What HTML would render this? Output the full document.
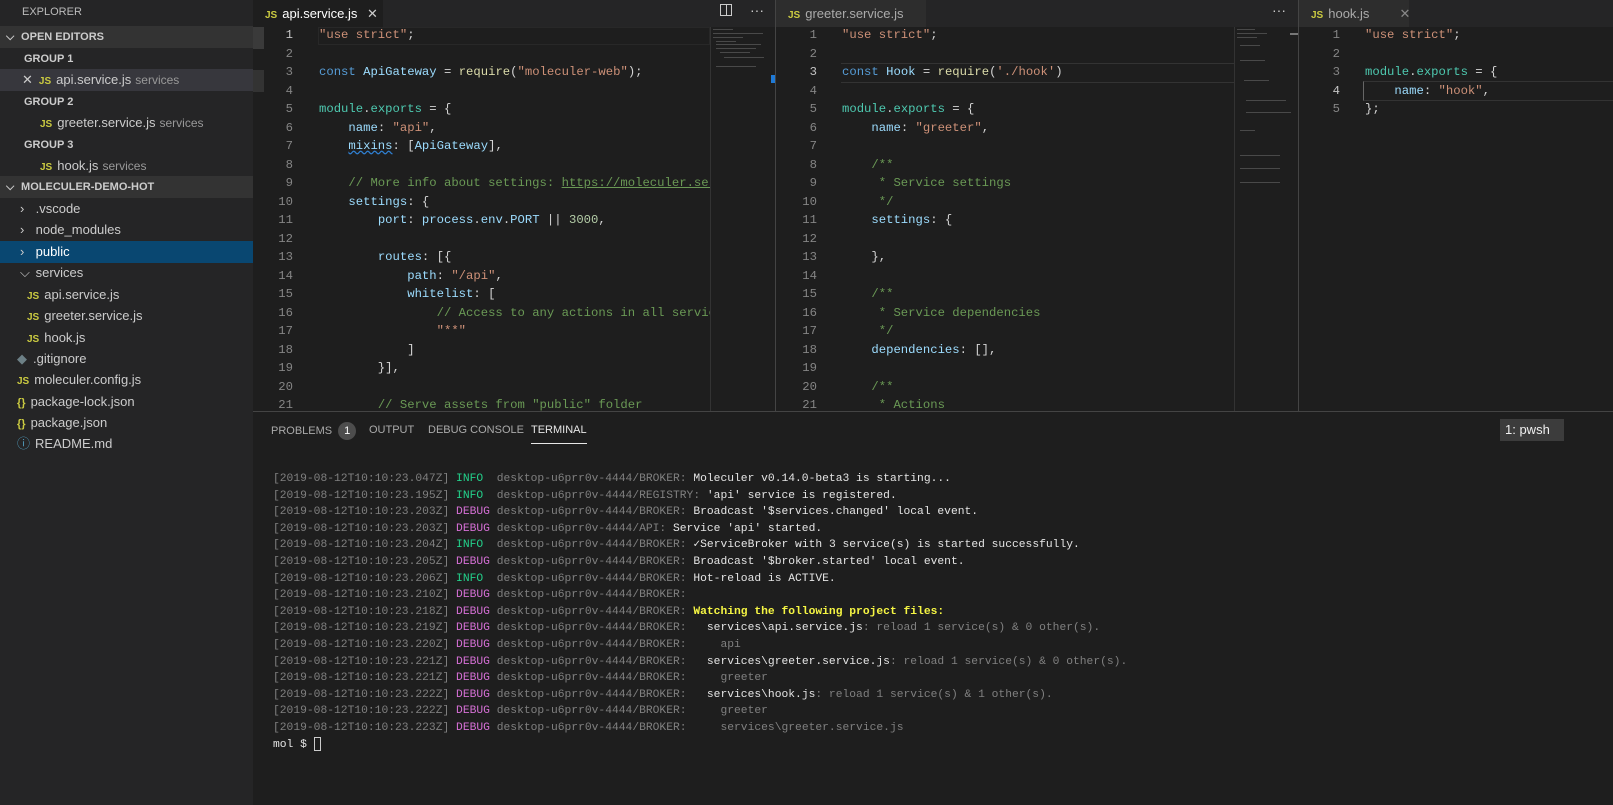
<!DOCTYPE html>
<html><head><meta charset="utf-8"><style>
*{margin:0;padding:0;box-sizing:border-box}
html,body{width:1613px;height:805px;overflow:hidden}
body{background:#1e1e1e;font-family:"Liberation Sans",sans-serif;position:relative}
.abs{position:absolute}
#side{left:0;top:0;width:253px;height:805px;background:#252526;color:#ccc;font-size:13px}
.row{position:absolute;left:0;width:253px;height:22px;line-height:22px;white-space:nowrap}
.hdr{font-weight:bold;font-size:11px;color:#ccc}
.js{color:#cbcb41;font-weight:bold;font-size:10px;margin-right:5px}
.dim{color:#999;font-size:12px;margin-left:4px}
.chev{display:inline-block;width:12px;color:#ccc}
.tabbar{position:absolute;top:0;height:27px;background:#252526}
.tab{position:absolute;top:0;height:27px;line-height:27px;font-size:13px;padding-left:12px;white-space:nowrap}
.code{position:absolute;top:26px;font-family:"Liberation Mono",monospace;font-size:12.25px;color:#d4d4d4}
.ln{position:absolute;top:26px;font-family:"Liberation Mono",monospace;font-size:12.25px;color:#858585;text-align:right}
.code div,.ln div{height:18.5px;line-height:18.5px;white-space:pre}
.s{color:#ce9178}.k{color:#569cd6}.v{color:#9cdcfe}.f{color:#dcdcaa}.t{color:#4ec9b0}.c{color:#6a9955}.n{color:#b5cea8}
#term{position:absolute;left:273px;top:471px;font-family:"Liberation Mono",monospace;font-size:11.3px;color:#ccc}
#term div{height:16.6px;line-height:16.6px;white-space:pre}
.g{color:#808080}.i{color:#23d18b}.d{color:#d670d6}.y{color:#f5f543;font-weight:bold}.w{color:#e5e5e5}
.mm{position:absolute;height:1px;background:#666;opacity:.6}
</style></head><body>
<div id="side" class="abs">
 <div class="row" style="top:0;height:24px;line-height:24px;padding-left:22px;font-size:11px;color:#bbb">EXPLORER</div>
 <div class="row hdr" style="top:26px;background:#333;padding-left:6px"><span class="chev">⌵</span> OPEN EDITORS</div>
 <div class="row hdr" style="top:48px;padding-left:24px">GROUP 1</div>
 <div class="row" style="top:69px;background:#37373d;padding-left:22px"><span style="color:#ccc;margin-right:6px">✕</span><span class="js">JS</span>api.service.js<span class="dim">services</span></div>
 <div class="row hdr" style="top:91px;padding-left:24px">GROUP 2</div>
 <div class="row" style="top:112px;padding-left:40px"><span class="js">JS</span>greeter.service.js<span class="dim">services</span></div>
 <div class="row hdr" style="top:134px;padding-left:24px">GROUP 3</div>
 <div class="row" style="top:155px;padding-left:40px"><span class="js">JS</span>hook.js<span class="dim">services</span></div>
 <div class="row hdr" style="top:176px;background:#333;padding-left:6px"><span class="chev">⌵</span> MOLECULER-DEMO-HOT</div>
 <div class="row" style="top:198px;padding-left:20px"><span class="chev">›</span> .vscode</div>
 <div class="row" style="top:219px;padding-left:20px"><span class="chev">›</span> node_modules</div>
 <div class="row" style="top:241px;padding-left:20px;background:#094771;color:#fff"><span class="chev">›</span> public</div>
 <div class="row" style="top:262px;padding-left:20px"><span class="chev">⌵</span> services</div>
 <div class="row" style="top:284px;padding-left:27px"><span class="js">JS</span>api.service.js</div>
 <div class="row" style="top:305px;padding-left:27px"><span class="js">JS</span>greeter.service.js</div>
 <div class="row" style="top:327px;padding-left:27px"><span class="js">JS</span>hook.js</div>
 <div class="row" style="top:348px;padding-left:17px"><span style="color:#6d8086;margin-right:6px">◆</span>.gitignore</div>
 <div class="row" style="top:369px;padding-left:17px"><span class="js">JS</span>moleculer.config.js</div>
 <div class="row" style="top:391px;padding-left:17px"><span style="color:#cbcb41;font-weight:bold;font-size:11px;margin-right:5px">{}</span>package-lock.json</div>
 <div class="row" style="top:412px;padding-left:17px"><span style="color:#cbcb41;font-weight:bold;font-size:11px;margin-right:5px">{}</span>package.json</div>
 <div class="row" style="top:433px;padding-left:17px"><span style="color:#519aba;margin-right:5px">ⓘ</span>README.md</div>
</div>

<!-- group 1 -->
<div class="tabbar" style="left:253px;width:522px"></div>
<div class="tab" style="left:253px;width:130px;background:#1e1e1e;color:#fff"><span class="js">JS</span>api.service.js <span style="margin-left:6px;color:#ccc">✕</span></div>
<div class="abs" style="left:720px;top:4px;width:12px;height:12px;border:1.5px solid #ccc"></div><div class="abs" style="left:726px;top:4px;width:1px;height:12px;background:#ccc"></div>
<div class="abs" style="left:750px;top:0;color:#ccc;font-size:14px;line-height:20px">···</div>
<div class="abs" style="left:253px;top:27px;width:11px;height:22px;background:#3a3a3a"></div>
<div class="abs" style="left:253px;top:70px;width:11px;height:22px;background:#333"></div>
<div class="abs" style="left:318px;top:27px;width:392px;height:18px;border:1px solid #282828"></div>
<div class="ln" style="left:265px;width:28px"><div style="color:#c6c6c6">1</div><div>2</div><div>3</div><div>4</div><div>5</div><div>6</div><div>7</div><div>8</div><div>9</div><div>10</div><div>11</div><div>12</div><div>13</div><div>14</div><div>15</div><div>16</div><div>17</div><div>18</div><div>19</div><div>20</div><div>21</div></div>
<div class="code" style="left:319px;width:391px;overflow:hidden;height:385px"><div><span class="s">"use strict"</span>;</div><div></div><div><span class="k">const</span> <span class="v">ApiGateway</span> = <span class="f">require</span>(<span class="s">"moleculer-web"</span>);</div><div></div><div><span class="t">module</span>.<span class="t">exports</span> = {</div><div>    <span class="v">name</span>: <span class="s">"api"</span>,</div><div>    <span class="v" style="text-decoration:underline wavy #2f7fd0">mixins</span>: [<span class="v">ApiGateway</span>],</div><div></div><div>    <span class="c">// More info about settings: <u>https://moleculer.services/docs</u></span></div><div>    <span class="v">settings</span>: {</div><div>        <span class="v">port</span>: <span class="v">process</span>.<span class="v">env</span>.<span class="v">PORT</span> || <span class="n">3000</span>,</div><div></div><div>        <span class="v">routes</span>: [{</div><div>            <span class="v">path</span>: <span class="s">"/api"</span>,</div><div>            <span class="v">whitelist</span>: [</div><div>                <span class="c">// Access to any actions in all services</span></div><div>                <span class="s">"**"</span></div><div>            ]</div><div>        }],</div><div></div><div>        <span class="c">// Serve assets from "public" folder</span></div></div>
<div class="abs" style="left:710px;top:27px;width:1px;height:384px;background:#333"></div>
<div class="abs" style="left:771px;top:75px;width:4px;height:8px;background:#1f7ad6"></div>
<div class="abs" style="left:775px;top:0;width:1px;height:411px;background:#444"></div>

<!-- group 2 -->
<div class="tabbar" style="left:776px;width:522px"></div>
<div class="tab" style="left:776px;width:150px;background:#2d2d2d;color:#aaa"><span class="js">JS</span>greeter.service.js</div>
<div class="abs" style="left:1272px;top:0;color:#ccc;font-size:14px;line-height:20px">···</div>
<div class="abs" style="left:841px;top:63px;width:394px;height:20px;border-top:1px solid #333;border-bottom:1px solid #333"></div>
<div class="ln" style="left:790px;width:27px"><div>1</div><div>2</div><div style="color:#c6c6c6">3</div><div>4</div><div>5</div><div>6</div><div>7</div><div>8</div><div>9</div><div>10</div><div>11</div><div>12</div><div>13</div><div>14</div><div>15</div><div>16</div><div>17</div><div>18</div><div>19</div><div>20</div><div>21</div></div>
<div class="code" style="left:842px;width:390px;overflow:hidden;height:385px"><div><span class="s">"use strict"</span>;</div><div></div><div><span class="k">const</span> <span class="v">Hook</span> = <span class="f">require</span>(<span class="s">'./hook'</span>)</div><div></div><div><span class="t">module</span>.<span class="t">exports</span> = {</div><div>    <span class="v">name</span>: <span class="s">"greeter"</span>,</div><div></div><div>    <span class="c">/**</span></div><div>    <span class="c"> * Service settings</span></div><div>    <span class="c"> */</span></div><div>    <span class="v">settings</span>: {</div><div></div><div>    },</div><div></div><div>    <span class="c">/**</span></div><div>    <span class="c"> * Service dependencies</span></div><div>    <span class="c"> */</span></div><div>    <span class="v">dependencies</span>: [],</div><div></div><div>    <span class="c">/**</span></div><div>    <span class="c"> * Actions</span></div></div>
<div class="abs" style="left:1234px;top:27px;width:1px;height:384px;background:#333"></div>
<div class="abs" style="left:1290px;top:33px;width:8px;height:2px;background:#777"></div>
<div class="abs" style="left:1298px;top:0;width:1px;height:411px;background:#444"></div>

<!-- group 3 -->
<div class="tabbar" style="left:1299px;width:314px"></div>
<div class="tab" style="left:1299px;width:110px;background:#2d2d2d;color:#aaa"><span class="js">JS</span>hook.js<span style="margin-left:30px;color:#888">✕</span></div>
<div class="abs" style="left:1363px;top:81px;width:250px;height:20px;border-top:1px solid #333;border-bottom:1px solid #333;border-left:1px solid #666"></div>
<div class="ln" style="left:1315px;width:25px"><div>1</div><div>2</div><div>3</div><div style="color:#c6c6c6">4</div><div>5</div></div>
<div class="code" style="left:1365px"><div><span class="s">"use strict"</span>;</div><div></div><div><span class="t">module</span>.<span class="t">exports</span> = {</div><div>    <span class="v">name</span>: <span class="s">"hook"</span>,</div><div>};</div></div>

<!-- minimap hints -->
<div class="mm" style="left:713px;top:29px;width:20px"></div><div class="mm" style="left:713px;top:33px;width:50px"></div><div class="mm" style="left:713px;top:37px;width:30px"></div><div class="mm" style="left:716px;top:41px;width:20px"></div><div class="mm" style="left:716px;top:44px;width:45px"></div><div class="mm" style="left:716px;top:48px;width:40px"></div><div class="mm" style="left:720px;top:52px;width:30px"></div><div class="mm" style="left:724px;top:57px;width:40px"></div><div class="mm" style="left:716px;top:66px;width:40px"></div>
<div class="mm" style="left:1237px;top:29px;width:18px"></div><div class="mm" style="left:1237px;top:33px;width:30px"></div><div class="mm" style="left:1237px;top:37px;width:20px"></div><div class="mm" style="left:1240px;top:45px;width:20px"></div><div class="mm" style="left:1240px;top:60px;width:25px"></div><div class="mm" style="left:1244px;top:80px;width:25px"></div><div class="mm" style="left:1246px;top:100px;width:40px"></div><div class="mm" style="left:1246px;top:112px;width:45px"></div><div class="mm" style="left:1240px;top:130px;width:15px"></div><div class="mm" style="left:1240px;top:155px;width:40px"></div><div class="mm" style="left:1240px;top:168px;width:40px"></div><div class="mm" style="left:1240px;top:182px;width:40px"></div>

<!-- panel -->
<div class="abs" style="left:253px;top:411px;width:1360px;height:1px;background:#444"></div>
<div class="abs" style="left:271px;top:422px;font-size:11px;color:#aaa;line-height:16px;white-space:nowrap">PROBLEMS <span style="display:inline-block;width:18px;height:18px;border-radius:9px;background:#4d4d4d;color:#fff;text-align:center;line-height:18px;margin-left:3px">1</span></div>
<div class="abs" style="left:369px;top:424px;font-size:11px;color:#aaa">OUTPUT</div>
<div class="abs" style="left:428px;top:424px;font-size:11px;color:#aaa">DEBUG CONSOLE</div>
<div class="abs" style="left:531px;top:424px;font-size:11px;color:#e7e7e7;padding-bottom:7px;border-bottom:1px solid #e7e7e7">TERMINAL</div>
<div class="abs" style="left:1500px;top:419px;width:64px;height:22px;background:#3c3c3c;color:#f0f0f0;font-size:13px;line-height:22px;padding-left:5px">1: pwsh</div>

<div id="term"><div><span class="g">[2019-08-12T10:10:23.047Z]</span> <span class="i">INFO </span> <span class="g">desktop-u6prr0v-4444/BROKER:</span> <span class="w">Moleculer v0.14.0-beta3 is starting...</span></div><div><span class="g">[2019-08-12T10:10:23.195Z]</span> <span class="i">INFO </span> <span class="g">desktop-u6prr0v-4444/REGISTRY:</span> <span class="w">'api' service is registered.</span></div><div><span class="g">[2019-08-12T10:10:23.203Z]</span> <span class="d">DEBUG</span> <span class="g">desktop-u6prr0v-4444/BROKER:</span> <span class="w">Broadcast '$services.changed' local event.</span></div><div><span class="g">[2019-08-12T10:10:23.203Z]</span> <span class="d">DEBUG</span> <span class="g">desktop-u6prr0v-4444/API:</span> <span class="w">Service 'api' started.</span></div><div><span class="g">[2019-08-12T10:10:23.204Z]</span> <span class="i">INFO </span> <span class="g">desktop-u6prr0v-4444/BROKER:</span> <span class="w">✓ServiceBroker with 3 service(s) is started successfully.</span></div><div><span class="g">[2019-08-12T10:10:23.205Z]</span> <span class="d">DEBUG</span> <span class="g">desktop-u6prr0v-4444/BROKER:</span> <span class="w">Broadcast '$broker.started' local event.</span></div><div><span class="g">[2019-08-12T10:10:23.206Z]</span> <span class="i">INFO </span> <span class="g">desktop-u6prr0v-4444/BROKER:</span> <span class="w">Hot-reload is ACTIVE.</span></div><div><span class="g">[2019-08-12T10:10:23.210Z]</span> <span class="d">DEBUG</span> <span class="g">desktop-u6prr0v-4444/BROKER:</span></div><div><span class="g">[2019-08-12T10:10:23.218Z]</span> <span class="d">DEBUG</span> <span class="g">desktop-u6prr0v-4444/BROKER:</span> <span class="y">Watching the following project files:</span></div><div><span class="g">[2019-08-12T10:10:23.219Z]</span> <span class="d">DEBUG</span> <span class="g">desktop-u6prr0v-4444/BROKER:</span>   <span class="w">services\api.service.js</span><span class="g">: reload 1 service(s) &amp; 0 other(s).</span></div><div><span class="g">[2019-08-12T10:10:23.220Z]</span> <span class="d">DEBUG</span> <span class="g">desktop-u6prr0v-4444/BROKER:</span>     <span class="g">api</span></div><div><span class="g">[2019-08-12T10:10:23.221Z]</span> <span class="d">DEBUG</span> <span class="g">desktop-u6prr0v-4444/BROKER:</span>   <span class="w">services\greeter.service.js</span><span class="g">: reload 1 service(s) &amp; 0 other(s).</span></div><div><span class="g">[2019-08-12T10:10:23.221Z]</span> <span class="d">DEBUG</span> <span class="g">desktop-u6prr0v-4444/BROKER:</span>     <span class="g">greeter</span></div><div><span class="g">[2019-08-12T10:10:23.222Z]</span> <span class="d">DEBUG</span> <span class="g">desktop-u6prr0v-4444/BROKER:</span>   <span class="w">services\hook.js</span><span class="g">: reload 1 service(s) &amp; 1 other(s).</span></div><div><span class="g">[2019-08-12T10:10:23.222Z]</span> <span class="d">DEBUG</span> <span class="g">desktop-u6prr0v-4444/BROKER:</span>     <span class="g">greeter</span></div><div><span class="g">[2019-08-12T10:10:23.223Z]</span> <span class="d">DEBUG</span> <span class="g">desktop-u6prr0v-4444/BROKER:</span>     <span class="g">services\greeter.service.js</span></div><div><span class="w">mol $ </span><span style="display:inline-block;width:7px;height:14px;border:1px solid #ccc;vertical-align:middle"></span></div></div>
</body></html>
